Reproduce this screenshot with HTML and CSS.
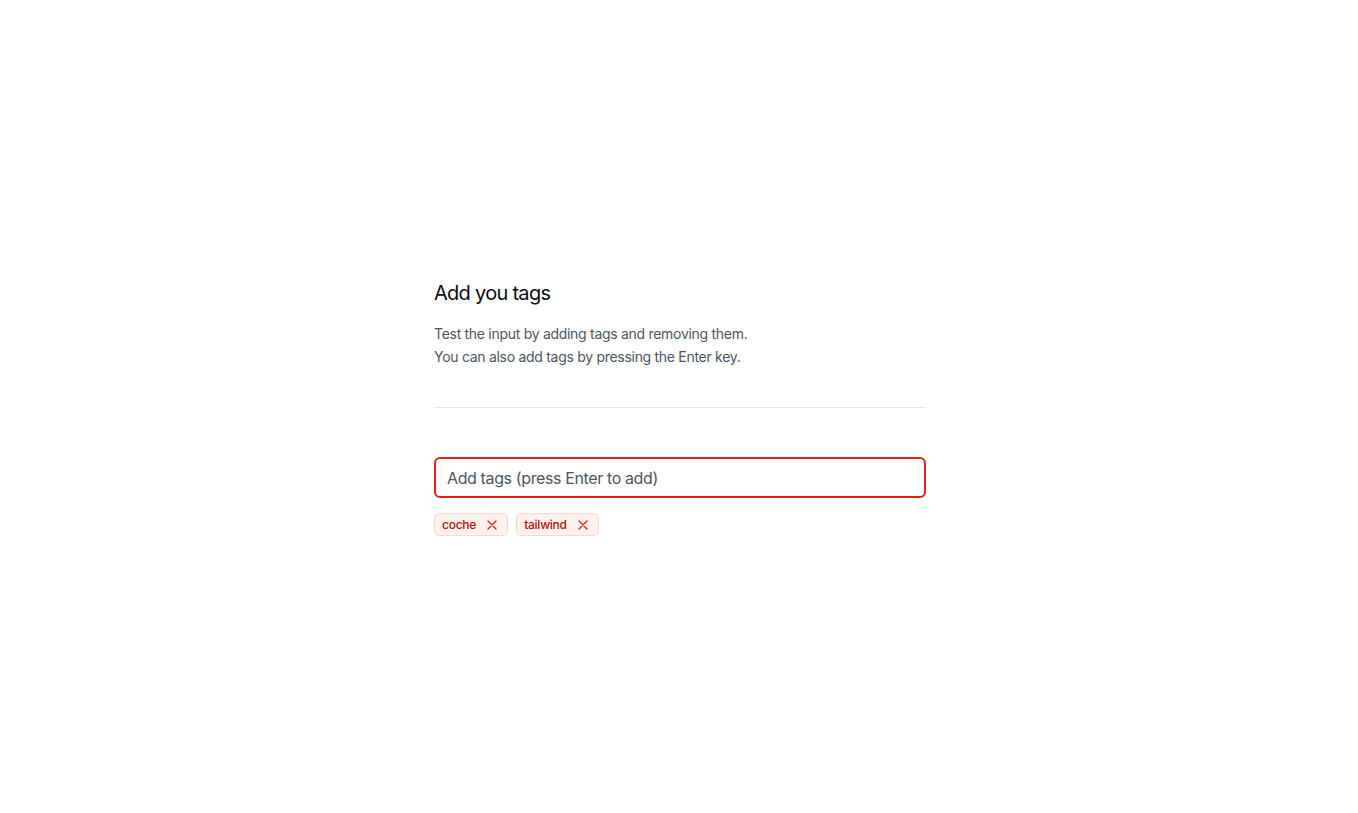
FILE: index.html
```html
<!DOCTYPE html>
<html lang="en">
<head>
<meta charset="utf-8">
<title>Tags input</title>
<link rel="stylesheet" href="styles.css">
</head>
<body>
<main class="page">
  <section class="panel">
    <h1 class="title">Add you tags</h1>
    <p class="desc">Test the input by adding tags and removing them.<br>You can also add tags by pressing the Enter key.</p>
    <hr class="divider">
    <input class="tag-input" id="tagInput" type="text" placeholder="Add tags (press Enter to add)" autofocus>
    <ul class="tags">
      <li class="tag"><span>coche</span><button class="tag-remove" aria-label="Remove coche"><svg viewBox="0 0 12 12" width="12" height="12"><path d="M2 2 L10 10 M10 2 L2 10" stroke="currentColor" stroke-width="1.3" stroke-linecap="round" fill="none"/></svg></button></li>
      <li class="tag"><span>tailwind</span><button class="tag-remove" aria-label="Remove tailwind"><svg viewBox="0 0 12 12" width="12" height="12"><path d="M2 2 L10 10 M10 2 L2 10" stroke="currentColor" stroke-width="1.3" stroke-linecap="round" fill="none"/></svg></button></li>
    </ul>
  </section>
</main>
<script src="script.js"></script>
</body>
</html>
```

FILE: styles.css
```css
* { box-sizing: border-box; }
html, body { margin: 0; padding: 0; background: #fff; }
body { font-family: Inter, "Noto Sans", sans-serif; color: #111827; }
.page {
  min-height: 813px;
  display: flex;
  justify-content: center;
  padding-top: 279px;
  padding-left: 2px;
}
.panel { width: 492px; }
.title {
  margin: 0;
  font-size: 20px;
  line-height: 28px;
  font-weight: 400;
  letter-spacing: -0.72px;
  color: #0b0b0f;
}
.desc {
  margin: 15px 0 0;
  font-size: 14px;
  line-height: 23px;
  letter-spacing: -0.29px;
  color: #4b5563;
}
.divider {
  margin: 39px 0 0;
  border: 0;
  border-top: 1px solid #e5e7eb;
  height: 0;
}
.tag-input {
  display: block;
  margin-top: 49px;
  width: 100%;
  height: 41px;
  border: 2px solid #f01c0c;
  border-radius: 6px;
  padding: 0 11px;
  font-family: inherit;
  font-size: 16px;
  letter-spacing: -0.38px;
  color: #111827;
  outline: none;
  caret-color: #374151;
}
.tag-input::placeholder { color: #4b5563; opacity: 1; }
.tags {
  list-style: none;
  margin: 15px 0 0;
  padding: 0;
  display: flex;
  gap: 8px;
}
.tag {
  display: flex;
  align-items: center;
  gap: 10px;
  height: 23px;
  padding: 0 9px 0 7px;
  background: #fff1ec;
  border: 1px solid #fdd5cc;
  border-radius: 5px;
  font-size: 12px;
  font-weight: 500;
  letter-spacing: -0.25px;
  color: #b80a0a;
}
.tag-remove {
  display: flex;
  align-items: center;
  justify-content: center;
  padding: 0;
  border: 0;
  background: none;
  color: #e0201a;
  cursor: pointer;
}
```

FILE: script.js
```js
document.getElementById('tagInput').focus();
```
